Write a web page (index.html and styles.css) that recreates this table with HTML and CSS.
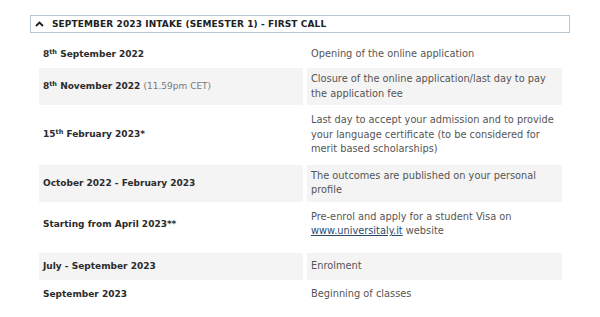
FILE: index.html
```html
<!DOCTYPE html>
<html lang="en">
<head>
    <meta charset="UTF-8">
    <meta name="viewport" content="width=device-width, initial-scale=1.0">
    <title>Intake Calendar</title>
    <link rel="stylesheet" href="styles.css">
</head>
<body>
    <div class="intake">
        <div class="intake-header">
            <svg class="chevron" width="9" height="6" viewBox="0 0 9 6">
                <path d="M1 5 L4.5 1.5 L8 5" fill="none" stroke="#222" stroke-width="1.9"/>
            </svg>
            <span class="intake-title">September 2023 Intake (Semester 1) - First Call</span>
        </div>

        <div class="calendar">
            <div class="cell date first"><span>8<sup>th</sup> September 2022</span></div>
            <div class="cell desc first"><span>Opening of the online application</span></div>

            <div class="cell date shaded"><span>8<sup>th</sup> November 2022 <span class="note">(11.59pm CET)</span></span></div>
            <div class="cell desc shaded"><span>Closure of the online application/last day to pay the application fee</span></div>

            <div class="cell date"><span>15<sup>th</sup> February 2023*</span></div>
            <div class="cell desc"><span>Last day to accept your admission and to provide your language certificate (to be considered for merit based scholarships)</span></div>

            <div class="cell date shaded"><span>October 2022 - February 2023</span></div>
            <div class="cell desc shaded"><span>The outcomes are published on your personal profile</span></div>

            <div class="cell date tall"><span>Starting from April 2023**</span></div>
            <div class="cell desc tall"><span>Pre-enrol and apply for a student Visa on <a href="#">www.universitaly.it</a> website</span></div>

            <div class="cell date shaded"><span>July - September 2023</span></div>
            <div class="cell desc shaded"><span>Enrolment</span></div>

            <div class="cell date last"><span>September 2023</span></div>
            <div class="cell desc last"><span>Beginning of classes</span></div>
        </div>
    </div>
</body>
</html>
```

FILE: styles.css
```css
* {
    box-sizing: border-box;
}

body {
    margin: 0;
    background: #fff;
    font-family: "DejaVu Sans", sans-serif;
    color: #333;
}

.intake {
    width: 540px;
    margin: 15px 0 0 30px;
}

.intake-header {
    display: flex;
    align-items: center;
    gap: 8px;
    height: 18px;
    padding: 0 4px;
    border: 1px solid #b9c6d0;
}

.chevron {
    flex-shrink: 0;
}

.intake-title {
    font-size: 9px;
    font-weight: bold;
    text-transform: uppercase;
    color: #222;
    letter-spacing: 0.1px;
}

.calendar {
    display: grid;
    grid-template-columns: 264px 255px;
    column-gap: 4px;
    margin-left: 9px;
}

.cell {
    display: flex;
    align-items: center;
    padding: 8px 4px;
}

.cell.first {
    padding: 12px 4px 4px;
}

.cell.last {
    padding: 5px 4px;
}

.cell.shaded {
    background: #f4f4f4;
    padding: 4px;
}

.cell.tall {
    padding-bottom: 14px;
}

.date {
    font-size: 9px;
    font-weight: bold;
    line-height: 19px;
    color: #2b2b2b;
}

.date sup {
    font-size: 6.5px;
    line-height: 0;
    vertical-align: 3px;
}

.note {
    font-weight: normal;
    color: #777;
}

.desc {
    font-size: 9.8px;
    line-height: 14.5px;
    color: #555;
}

.desc a {
    color: #2c4a6b;
}
```
